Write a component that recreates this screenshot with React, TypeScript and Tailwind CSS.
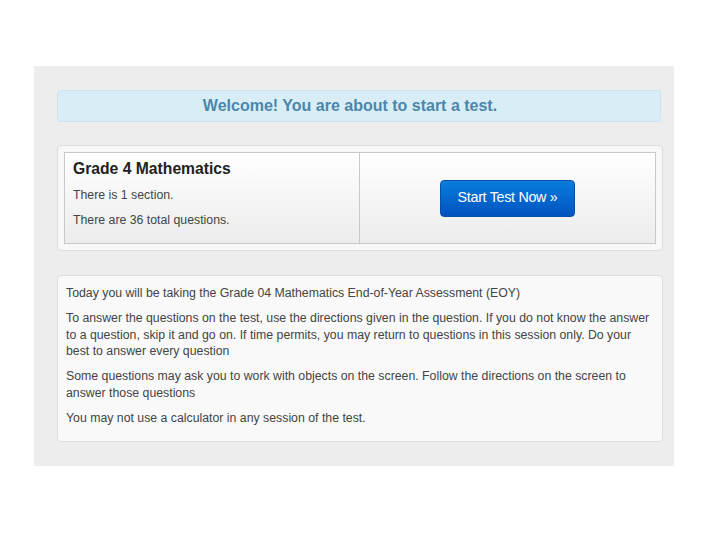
export default function App() {
  return (
    <div className="w-[720px] h-[540px] bg-white pt-[66px] pl-[34px]" style={{ fontFamily: '"Liberation Sans", Arial, sans-serif' }}>
      <div className="w-[640px] h-[400px] bg-[#ededed] pl-[23px] pr-[12px] pt-[24px]">
        <div className="w-[604px] h-[32px] rounded-[4px] bg-[#d9edf7] border border-[#c9e4f0] flex items-center justify-center pr-[18px]">
          <span className="text-[16px] font-bold text-[#4a87ab]">Welcome! You are about to start a test.</span>
        </div>
        <div className="mt-[23px] w-[606px] h-[106px] rounded-[4px] border border-[#dcdcdc] bg-[#f7f7f7] p-[6px]">
          <div className="h-full flex border border-[#c8c8c8] bg-gradient-to-b from-white to-[#ececec]">
            <div className="w-[295px] border-r border-[#c8c8c8] pl-[8px] pt-[7px] text-[#333]">
              <div className="text-[15.7px] font-bold text-[#222] leading-[18px]">Grade 4 Mathematics</div>
              <div className="text-[12.3px] leading-[16px] mt-[9px] text-[#444]">There is 1 section.</div>
              <div className="text-[12.3px] leading-[16px] mt-[9px] text-[#444]">There are 36 total questions.</div>
            </div>
            <div className="flex-1 flex items-center justify-center">
              <button className="w-[135px] h-[37px] rounded-[4px] bg-gradient-to-b from-[#0a7ddb] to-[#0453c0] border border-[#0a4fa8] text-white text-[14.3px] tracking-[-0.3px] flex items-center justify-center">
                Start Test Now »
              </button>
            </div>
          </div>
        </div>
        <div className="mt-[24px] w-[606px] h-[167px] rounded-[4px] border border-[#dcdcdc] bg-[#f9f9f9] pl-[8px] pr-[6px] pt-[9px] text-[12.3px] leading-[16.5px] text-[#444]">
          <p>Today you will be taking the Grade 04 Mathematics End-of-Year Assessment (EOY)</p>
          <p className="mt-[8.5px]">To answer the questions on the test, use the directions given in the question. If you do not know the answer to a question, skip it and go on. If time permits, you may return to questions in this session only. Do your best to answer every question</p>
          <p className="mt-[8.5px]">Some questions may ask you to work with objects on the screen. Follow the directions on the screen to answer those questions</p>
          <p className="mt-[8.5px]">You may not use a calculator in any session of the test.</p>
        </div>
      </div>
    </div>
  );
}
